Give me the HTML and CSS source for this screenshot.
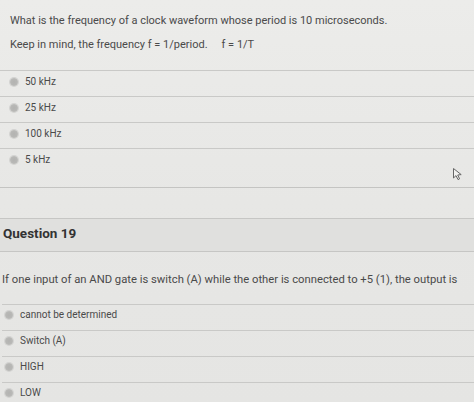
FILE: index.html
```html
<!DOCTYPE html>
<html lang="en">
<head>
    <meta charset="UTF-8">
    <meta name="viewport" content="width=device-width, initial-scale=1.0">
    <title>Quiz</title>
    <link rel="stylesheet" href="styles.css">
</head>
<body>
    <div class="page">
        <!-- Question 18 (body only, header scrolled away) -->
        <div class="question first">
            <p class="prompt">What is the frequency of a clock waveform whose period is 10 microseconds.</p>
            <p class="prompt hint">Keep in mind, the frequency f = 1/period.<span class="formula">f = 1/T</span></p>
            <ul class="answers">
                <li><span class="radio"></span>50 kHz</li>
                <li><span class="radio"></span>25 kHz</li>
                <li><span class="radio"></span>100 kHz</li>
                <li class="last"><span class="radio"></span>5 kHz
                    <svg class="pointer" width="12" height="14" viewBox="0 0 12 14">
                        <path d="M1.5 1.5 L1.5 11 L4 8.6 L6 12.6 L7.6 11.8 L5.7 8 L9.2 7.6 Z" fill="#f2f2f0" stroke="#666" stroke-width="1" stroke-linejoin="round"/>
                    </svg>
                </li>
            </ul>
        </div>

        <!-- Question 19 -->
        <div class="question-header">Question 19</div>
        <div class="question second">
            <p class="prompt">If one input of an AND gate is switch (A) while the other is connected to +5 (1), the output is</p>
            <ul class="answers">
                <li><span class="radio"></span>cannot be determined</li>
                <li><span class="radio"></span>Switch (A)</li>
                <li><span class="radio"></span>HIGH</li>
                <li><span class="radio"></span>LOW</li>
            </ul>
        </div>
    </div>
</body>
</html>
```

FILE: styles.css
```css
body {
    margin: 0;
    padding: 0;
    background-color: #e8e8e6;
    font-family: Roboto, "Liberation Sans", Arial, sans-serif;
    color: #4a4a4a;
    overflow: hidden;
}
.page {
    width: 474px;
    height: 402px;
    background: linear-gradient(180deg, #ececea 0%, #e7e7e5 50%, #e5e5e3 100%);
}
.question.first {
    padding-top: 13px;
    padding-left: 10px;
    font-size: 11px;
}
.prompt {
    margin: 0;
    line-height: 16px;
}
.hint {
    margin-top: 8px;
}
.formula {
    margin-left: 14px;
}
.answers {
    list-style: none;
    margin: 0;
    padding: 0;
}
.first .answers {
    margin-top: 17px;
    margin-left: -10px;
}
.answers li {
    display: flex;
    align-items: flex-start;
    height: 20px;
    padding-top: 5px;
    border-top: 1px solid #c9c9c7;
    font-size: 10px;
    line-height: 12px;
    color: #4a4a4a;
}
.first .answers li {
    padding-left: 10px;
}
.first .answers li.last {
    height: 33px;
    border-bottom: 1px solid #c4c4c2;
    position: relative;
}
.radio {
    width: 8px;
    height: 8px;
    margin-top: 2px;
    border-radius: 50%;
    background: radial-gradient(circle, #b3b3b1 0%, #b8b8b6 55%, #cfcfcd 100%);
    box-shadow: 0 0 0 1px #d3d3d1;
    margin-right: 7px;
    flex-shrink: 0;
}
.pointer {
    position: absolute;
    left: 452px;
    top: 18px;
}
.question-header {
    margin-top: 30px;
    height: 32px;
    line-height: 28px;
    padding-left: 3px;
    border-top: 1px solid #c6c6c4;
    border-bottom: 1px solid #c6c6c4;
    background-color: #e0e0de;
    font-size: 13.5px;
    font-weight: bold;
    color: #333;
}
.question.second {
    padding-left: 2px;
}
.second .prompt {
    padding-top: 20px;
    height: 32px;
    font-size: 11.25px;
}
.second .answers li {
    padding-left: 3px;
    padding-top: 4px;
    height: 21px;
}
```
